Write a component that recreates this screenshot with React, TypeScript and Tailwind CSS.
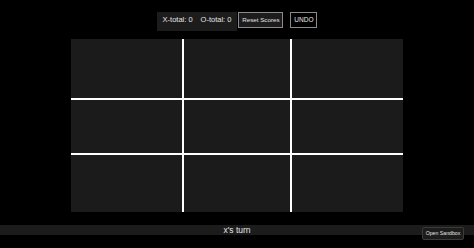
import React, { useState } from 'react';

type Cell = 'X' | 'O' | null;

const CELL_BORDERS = [
  '',
  'border-x-2 border-white',
  '',
  'border-y-2 border-white',
  'border-2 border-white',
  'border-y-2 border-white',
  '',
  'border-x-2 border-white',
  '',
];

export default function App() {
  const [cells, setCells] = useState<Cell[]>(Array(9).fill(null));
  const [xTotal, setXTotal] = useState(0);
  const [oTotal, setOTotal] = useState(0);
  const turn = cells.filter(Boolean).length % 2 === 0 ? 'x' : 'o';

  return (
    <div className="relative h-[248px] w-[474px] overflow-hidden bg-black font-['Liberation_Sans',Arial,sans-serif] text-[#e6e6e6]">
      <div className="flex items-start justify-center pt-[12px]">
        <div className="flex h-[19px] items-start gap-[8px] bg-[#1c1c1c] px-[6px] pt-[3px] text-[7.5px] leading-[10px]">
          <span>X-total: {xTotal}</span>
          <span>O-total: {oTotal}</span>
        </div>
        <button
          onClick={() => {
            setXTotal(0);
            setOTotal(0);
          }}
          className="ml-[1px] h-[16px] w-[45px] border border-[#8a8a8a] bg-[#1c1c1c] text-[6.2px] leading-none text-[#e6e6e6]"
        >
          Reset Scores
        </button>
        <button className="ml-[7px] h-[16px] w-[27px] border border-[#8a8a8a] bg-black text-[6.5px] leading-none text-[#e6e6e6]">
          UNDO
        </button>
      </div>

      <div className="mx-auto mt-[8px] grid w-[332px] grid-cols-[111px_110px_111px] grid-rows-[59px_57px_57px] bg-[#1b1b1b]">
        {cells.map((c, i) => (
          <div
            key={i}
            onClick={() => {
              if (c) return;
              const next = [...cells];
              next[i] = turn === 'x' ? 'X' : 'O';
              setCells(next);
            }}
            className={`flex items-center justify-center text-2xl ${CELL_BORDERS[i]}`}
          >
            {c}
          </div>
        ))}
      </div>

      <div className="mt-[13px] flex h-[10px] w-full items-center justify-center bg-[#1c1c1c] text-[8.5px] leading-none">
        {turn}'s turn
      </div>

      <button className="absolute bottom-[8px] right-[10px] h-[13px] w-[42px] rounded-[2px] border border-[#3a3a3a] bg-[#1c1c1c] text-[5.2px] leading-none text-[#e6e6e6]">
        Open Sandbox
      </button>
    </div>
  );
}
